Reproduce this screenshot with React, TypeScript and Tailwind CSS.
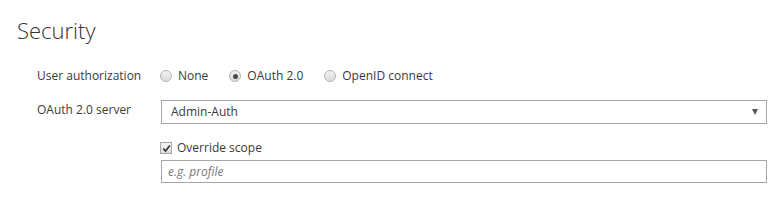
import { useState } from "react"

type Option = { value: string; label: string }

const authOptions: Option[] = [
  { value: "none", label: "None" },
  { value: "oauth2", label: "OAuth 2.0" },
  { value: "openid", label: "OpenID connect" },
]

function Radio({ checked }: { checked: boolean }) {
  return (
    <span className="flex h-[12px] w-[12px] items-center justify-center rounded-full border border-[#b4b4b4] bg-gradient-to-b from-[#f2f2f2] to-[#dcdcdc]">
      {checked && <span className="h-[5px] w-[5px] rounded-full bg-[#4a4a4a]" />}
    </span>
  )
}

export default function App() {
  const [auth, setAuth] = useState("oauth2")
  const [override, setOverride] = useState(true)

  return (
    <div
      className="h-[202px] w-[781px] bg-white text-[#3a3a3a] pl-[17px] pt-[15px]"
      style={{ fontFamily: '"Open Sans", "Segoe UI", sans-serif' }}
    >
      <h2 className="text-[22px] font-light leading-[30px] text-[#333]">Security</h2>

      <div className="mt-[19px] pl-[20px] pr-[14px] text-[12px]">
        {/* User authorization */}
        <div className="flex h-[24px] items-center">
          <label className="w-[123px] shrink-0">User authorization</label>
          <div className="flex items-center">
            {authOptions.map((opt) => (
              <button
                key={opt.value}
                onClick={() => setAuth(opt.value)}
                className="mr-[21px] flex items-center gap-[6px]"
              >
                <Radio checked={auth === opt.value} />
                <span>{opt.label}</span>
              </button>
            ))}
          </div>
        </div>

        {/* OAuth server */}
        <div className="mt-[12px] flex items-start">
          <label className="w-[124px] shrink-0 pt-[1px]">OAuth 2.0 server</label>
          <div className="relative flex h-[24px] flex-1 items-center border border-[#a6a6a6] pl-[9px]">
            <span>Admin-Auth</span>
            <span className="absolute right-[8px] top-[8px] h-0 w-0 border-x-[3.5px] border-t-[6px] border-x-transparent border-t-[#555]" />
          </div>
        </div>

        {/* Scope */}
        <div className="mt-[15px] flex">
          <div className="w-[123px] shrink-0" />
          <div className="flex-1">
            <button
              onClick={() => setOverride(!override)}
              className="flex items-center gap-[5px]"
            >
              <span className="flex h-[12px] w-[12px] items-center justify-center border border-[#a6a6a6] bg-gradient-to-b from-[#f4f4f4] to-[#dedede]">
                {override && (
                  <svg viewBox="0 0 10 10" className="h-[9px] w-[9px]">
                    <path d="M1.5 5.2 L4 7.8 L8.7 1.8" fill="none" stroke="#333" strokeWidth="1.8" />
                  </svg>
                )}
              </span>
              <span>Override scope</span>
            </button>
            <input
              placeholder="e.g. profile"
              className="ml-[1px] mt-[3px] h-[23px] w-[calc(100%-1px)] border border-[#a6a6a6] px-[6px] text-[12px] outline-none placeholder:italic placeholder:text-[#777]"
            />
          </div>
        </div>
      </div>
    </div>
  )
}
